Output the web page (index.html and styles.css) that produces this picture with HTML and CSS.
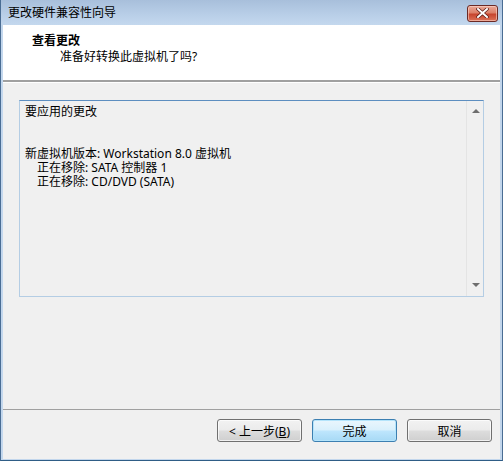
FILE: index.html
```html
<!DOCTYPE html>
<html lang="zh-CN">
<head>
<meta charset="utf-8">
<title>更改硬件兼容性向导</title>
<link rel="stylesheet" href="styles.css">
</head>
<body>
<div class="window">
  <div class="titlebar">
    <span class="title">更改硬件兼容性向导</span>
    <button class="close" aria-label="关闭">
      <svg width="13" height="10" viewBox="0 0 13 10">
        <path d="M2 1 L11 9 M11 1 L2 9" stroke="#5a1a14" stroke-width="3.4" stroke-linecap="square"/>
        <path d="M2 1 L11 9 M11 1 L2 9" stroke="#ffffff" stroke-width="2" stroke-linecap="square"/>
      </svg>
    </button>
  </div>
  <div class="client">
    <header class="header">
      <div class="heading">查看更改</div>
      <div class="subheading">准备好转换此虚拟机了吗?</div>
    </header>
    <main class="body">
      <div class="textbox">
        <div class="lines">
          <div>要应用的更改</div>
          <div>&nbsp;</div>
          <div>&nbsp;</div>
          <div>新虚拟机版本: Workstation 8.0 虚拟机</div>
          <div class="indent">正在移除: SATA 控制器 1</div>
          <div class="indent">正在移除: CD/DVD (SATA)</div>
        </div>
        <div class="scrollbar">
          <span class="arrow up"></span>
          <span class="arrow down"></span>
        </div>
      </div>
    </main>
    <footer class="footer">
      <button class="btn">&lt;&nbsp;上一步(<u>B</u>)</button>
      <button class="btn default">完成</button>
      <button class="btn">取消</button>
    </footer>
  </div>
</div>
</body>
</html>
```
FILE: styles.css
```css
html, body {
  margin: 0;
  padding: 0;
  width: 503px;
  height: 461px;
  overflow: hidden;
  background: #f0f0f0;
}

body {
  font-family: "Noto Sans", "Noto Sans CJK SC", sans-serif;
  font-size: 12px;
  color: #000;
}

.window {
  box-sizing: border-box;
  width: 503px;
  height: 461px;
  display: flex;
  flex-direction: column;
  border-left: 1px solid #4a6d94;
  border-right: 1px solid #4a6d94;
  border-bottom: 1px solid #2f5d86;
  background: #c2d6ec;
  padding: 0 2px 1px 1px;
}

.titlebar {
  height: 25px;
  flex: none;
  display: flex;
  align-items: center;
  justify-content: space-between;
  background: linear-gradient(#a8bfdb, #b9cfe8 60%, #c4d8ee);
  margin: 0 -2px 0 -1px;
  padding: 0 4px 0 7px;
}

.title {
  line-height: 16px;
  padding-top: 1px;
  color: #000;
}

.close {
  width: 31px;
  height: 17px;
  margin-top: 1px;
  padding: 0;
  border: 1px solid #6b2a25;
  border-radius: 3px;
  background: linear-gradient(#eaa897, #dc8069 45%, #c7452e 55%, #dc7258);
  box-shadow: inset 0 0 0 1px rgba(255, 220, 210, 0.55);
  display: flex;
  align-items: center;
  justify-content: center;
}

.client {
  flex: 1;
  display: flex;
  flex-direction: column;
  background: #f0f0f0;
  border-left: 1px solid #c4d8ee;
}

.header {
  height: 55px;
  flex: none;
  background: #fff;
  border-bottom: 2px solid #a0a0a0;
  box-shadow: 0 1px 0 #fff;
  box-sizing: content-box;
}

.heading {
  font-weight: bold;
  padding: 8px 0 0 29px;
  line-height: 16px;
}

.subheading {
  padding: 0 0 0 57px;
  line-height: 16px;
}

.body {
  flex: 1;
  padding: 18px 16px 0 16px;
}

.textbox {
  height: 195px;
  display: flex;
  border: 1px solid #b4cde4;
  border-top-color: #5d8ec0;
  background: #f0f0f0;
}

.lines {
  flex: 1;
  padding: 4px 0 0 5px;
}

.lines div {
  line-height: 14px;
  white-space: nowrap;
}

.indent {
  padding-left: 12px;
}

.scrollbar {
  width: 16px;
  position: relative;
  border-left: 1px solid #e4e4e4;
  background: #f0f0f0;
}

.arrow {
  position: absolute;
  left: 5px;
  width: 0;
  height: 0;
  border-left: 4px solid transparent;
  border-right: 4px solid transparent;
}

.arrow.up {
  top: 8px;
  border-bottom: 4px solid #6e6e6e;
}

.arrow.down {
  bottom: 9px;
  border-top: 4px solid #6e6e6e;
}

.footer {
  height: 40px;
  flex: none;
  border-top: 1px solid #a0a0a0;
  display: flex;
  justify-content: flex-end;
  align-items: flex-start;
  gap: 10px;
  padding: 9px 8px 0 0;
}

.btn {
  width: 85px;
  height: 23px;
  padding: 0;
  font: inherit;
  color: #000;
  border: 1px solid #707070;
  border-radius: 3px;
  background: linear-gradient(#f2f2f2, #ebebeb 48%, #dddddd 52%, #cfcfcf);
  box-shadow: inset 0 0 0 1px rgba(255, 255, 255, 0.7);
}

.btn u {
  text-decoration: underline;
}

.btn.default {
  border-color: #3c7fb1;
  background: linear-gradient(#eaf6fd, #d9f0fc 48%, #bee6fd 52%, #a7d9f5);
  box-shadow: inset 0 0 0 1px #b4e4fb;
}
```
